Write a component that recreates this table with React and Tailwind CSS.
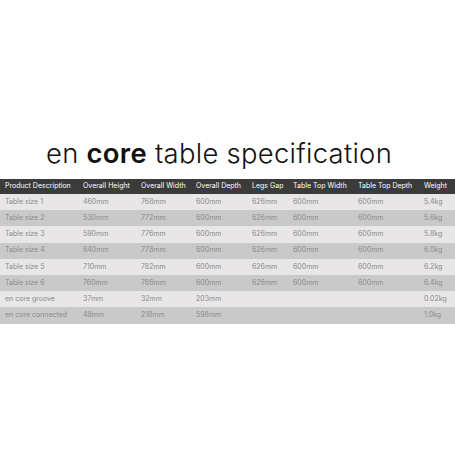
const rows = [
  ['Table size 1', '460mm', '768mm', '600mm', '626mm', '600mm', '600mm', '5.4kg'],
  ['Table size 2', '530mm', '772mm', '600mm', '626mm', '600mm', '600mm', '5.6kg'],
  ['Table size 3', '590mm', '776mm', '600mm', '626mm', '600mm', '600mm', '5.8kg'],
  ['Table size 4', '640mm', '778mm', '600mm', '626mm', '600mm', '600mm', '6.0kg'],
  ['Table size 5', '710mm', '782mm', '600mm', '626mm', '600mm', '600mm', '6.2kg'],
  ['Table size 6', '760mm', '786mm', '600mm', '626mm', '600mm', '600mm', '6.4kg'],
  ['en core groove', '37mm', '32mm', '203mm', '', '', '', '0.02kg'],
  ['en core connected', '48mm', '218mm', '598mm', '', '', '', '1.0kg'],
]

const head = [
  'Product Description',
  'Overall Height',
  'Overall Width',
  'Overall Depth',
  'Legs Gap',
  'Table Top Width',
  'Table Top Depth',
  'Weight',
]

const cols = 'grid grid-cols-[78px_58px_55px_56px_41px_65px_66px_36px]'

export default function App() {
  return (
    <div className="w-[455px] h-[455px] bg-white font-['Inter',sans-serif]">
      <div className="pt-[135px] pl-[46px] text-[27.4px] leading-[36px] font-light tracking-[0.3px] text-[#111]">
        en <span className="font-semibold">core</span> table specification
      </div>

      <div className="mt-[8px] text-[7px]">
        <div className={`${cols} h-[15px] items-center bg-[#3b3b3b] text-white`}>
          {head.map((h) => (
            <div key={h} className="pl-[5px] whitespace-nowrap">{h}</div>
          ))}
        </div>
        {rows.map((r, i) => (
          <div
            key={i}
            className={`${cols} h-[16.2px] items-center text-[#8b8b8b] ${
              i % 2 === 0 ? 'bg-[#e8e6e7]' : 'bg-[#c9c9c9]'
            }`}
          >
            {r.map((c, j) => (
              <div key={j} className="pl-[5px] whitespace-nowrap">{c}</div>
            ))}
          </div>
        ))}
      </div>
    </div>
  )
}
